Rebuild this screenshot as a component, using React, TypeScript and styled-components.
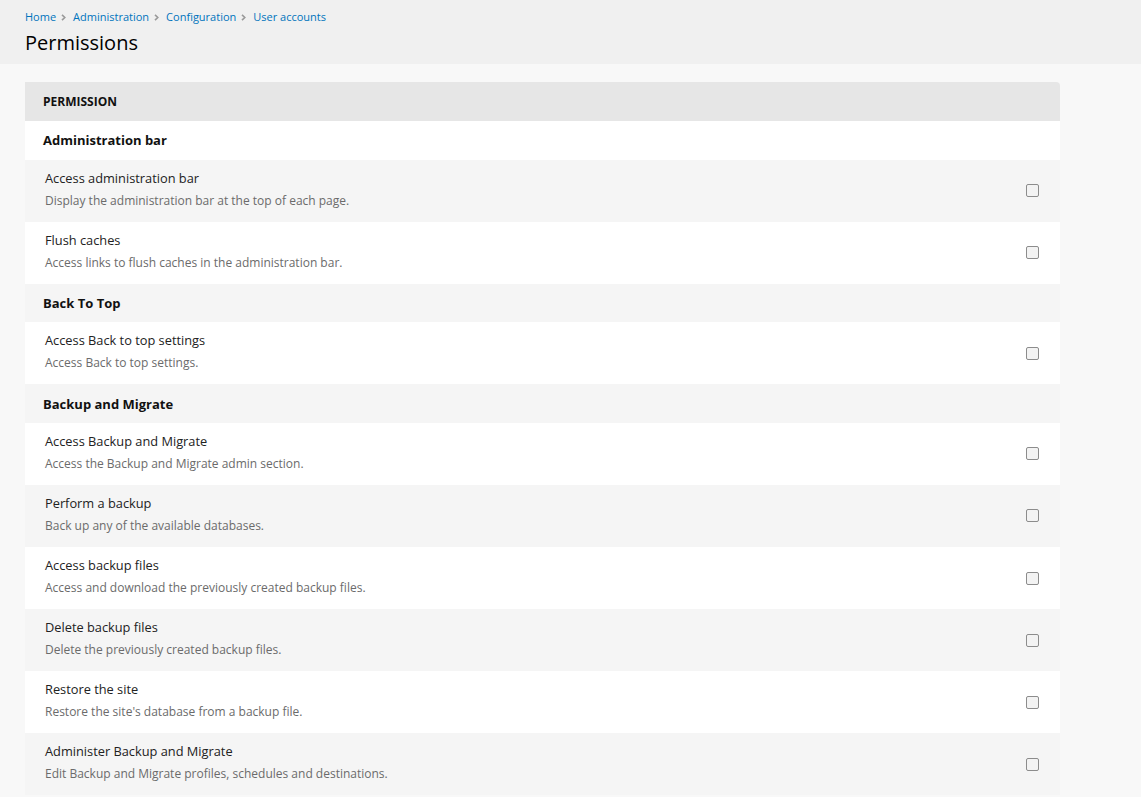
import React from 'react'
import styled, { createGlobalStyle } from 'styled-components'

const GlobalStyle = createGlobalStyle`
  html, body {
    margin: 0;
    padding: 0;
    background: #f8f8f8;
    font-family: "Open Sans", "Noto Sans", sans-serif;
    color: #222;
  }
`

type Perm = { title: string; description: string }
type Module = { name: string; perms: Perm[] }

const modules: Module[] = [
  {
    name: 'Administration bar',
    perms: [
      { title: 'Access administration bar', description: 'Display the administration bar at the top of each page.' },
      { title: 'Flush caches', description: 'Access links to flush caches in the administration bar.' },
    ],
  },
  {
    name: 'Back To Top',
    perms: [{ title: 'Access Back to top settings', description: 'Access Back to top settings.' }],
  },
  {
    name: 'Backup and Migrate',
    perms: [
      { title: 'Access Backup and Migrate', description: 'Access the Backup and Migrate admin section.' },
      { title: 'Perform a backup', description: 'Back up any of the available databases.' },
      { title: 'Access backup files', description: 'Access and download the previously created backup files.' },
      { title: 'Delete backup files', description: 'Delete the previously created backup files.' },
      { title: 'Restore the site', description: "Restore the site's database from a backup file." },
      { title: 'Administer Backup and Migrate', description: 'Edit Backup and Migrate profiles, schedules and destinations.' },
    ],
  },
]

const Header = styled.header`
  background: #f0f0f0;
  padding: 9px 25px 8px;
  height: 47px;
`

const Breadcrumb = styled.nav`
  display: flex;
  align-items: center;
  font-size: 11px;
  line-height: 16px;
`

const Crumb = styled.a`
  color: #0074bd;
  text-decoration: none;
`

const SepIcon = styled.svg`
  width: 5px;
  height: 7px;
  margin: 1px 7px 0 5px;
`

const Title = styled.h1`
  margin: 5px 0 0;
  font-size: 20px;
  font-weight: 400;
  line-height: 26px;
  color: #000;
`

const Content = styled.main`
  padding: 18px 81px 0 25px;
`

const Table = styled.div`
  display: flex;
  flex-direction: column;
  width: 1035px;
`

const HeadRow = styled.div`
  background: #e6e6e6;
  height: 39px;
  display: flex;
  align-items: center;
  padding-left: 18px;
  border-radius: 0 4px 0 0;
  font-size: 12px;
  font-weight: 700;
  text-transform: uppercase;
  color: #111;
`

const Row = styled.div<{ $odd: boolean }>`
  background: ${(p) => (p.$odd ? '#f5f5f5' : '#ffffff')};
  display: flex;
  align-items: center;
`

const ModuleRow = styled(Row)`
  height: 38.5px;
  padding-left: 18px;
  font-size: 13px;
  font-weight: 700;
  color: #111;
`

const PermRow = styled(Row)`
  height: 62.1px;
  padding: 0 21px 0 20px;
  justify-content: space-between;
`

const PermText = styled.div`
  display: flex;
  flex-direction: column;
  gap: 6px;
  margin-top: -3px;
`

const PermTitle = styled.div`
  font-size: 12.8px;
  line-height: 17px;
  color: #222;
`

const PermDesc = styled.div`
  font-size: 12px;
  line-height: 16px;
  color: #6b6b6b;
`

const Box = styled.span`
  width: 11px;
  height: 11px;
  border: 1px solid #8c8c8c;
  border-radius: 2px;
  background: #f3f3f3;
`

function Sep() {
  return (
    <SepIcon viewBox="0 0 5 7">
      <path d="M1 0.8 L3.8 3.5 L1 6.2" fill="none" stroke="#9a9a9a" strokeWidth="1.6" />
    </SepIcon>
  )
}

export default function App() {
  let i = 0
  const rows: React.ReactNode[] = []
  modules.forEach((m) => {
    rows.push(
      <ModuleRow key={m.name} $odd={i++ % 2 === 1}>
        {m.name}
      </ModuleRow>
    )
    m.perms.forEach((p) => {
      rows.push(
        <PermRow key={p.title} $odd={i++ % 2 === 1}>
          <PermText>
            <PermTitle>{p.title}</PermTitle>
            <PermDesc>{p.description}</PermDesc>
          </PermText>
          <Box />
        </PermRow>
      )
    })
  })

  return (
    <>
      <GlobalStyle />
      <Header>
        <Breadcrumb>
          <Crumb href="#">Home</Crumb>
          <Sep />
          <Crumb href="#">Administration</Crumb>
          <Sep />
          <Crumb href="#">Configuration</Crumb>
          <Sep />
          <Crumb href="#">User accounts</Crumb>
        </Breadcrumb>
        <Title>Permissions</Title>
      </Header>
      <Content>
        <Table>
          <HeadRow>Permission</HeadRow>
          {rows}
        </Table>
      </Content>
    </>
  )
}
